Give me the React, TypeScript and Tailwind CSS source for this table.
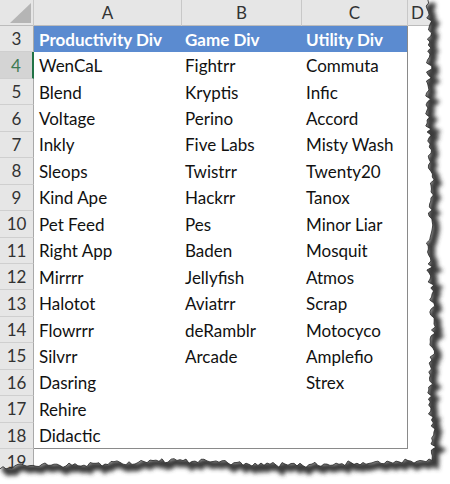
import React from "react";

const colA = ["WenCaL", "Blend", "Voltage", "Inkly", "Sleops", "Kind Ape", "Pet Feed", "Right App", "Mirrrr", "Halotot", "Flowrrr", "Silvrr", "Dasring", "Rehire", "Didactic"];
const colB = ["Fightrr", "Kryptis", "Perino", "Five Labs", "Twistrr", "Hackrr", "Pes", "Baden", "Jellyfish", "Aviatrr", "deRamblr", "Arcade"];
const colC = ["Commuta", "Infic", "Accord", "Misty Wash", "Twenty20", "Tanox", "Minor Liar", "Mosquit", "Atmos", "Scrap", "Motocyco", "Amplefio", "Strex"];

// deterministic jitter for the torn paper edge
function jag(seed: number) {
  let s = seed;
  return () => {
    s = (s * 9301 + 49297) % 233280;
    return s / 233280;
  };
}

function tornEdge() {
  const r = jag(7);
  const pts: [number, number][] = [];
  for (let y = 0; y <= 458; y += 3) {
    const base = 428 + (y / 458) * 5 + Math.sin(y / 23) * 1.5;
    pts.push([base + (r() - 0.5) * 6, y]);
  }
  for (let x = 432; x >= 0; x -= 3) {
    const base = 463 + Math.sin(x / 37) * 2 + (x < 40 ? (40 - x) / 10 : 0);
    pts.push([x, base + (r() - 0.5) * 5]);
  }
  return pts;
}

function TornOverlay() {
  const pts = tornEdge();
  const line = pts.map((p) => p.join(",")).join(" ");
  const outside = `450,0 ${line} 0,484 450,484`;
  return (
    <svg className="absolute inset-0 pointer-events-none" width={450} height={484}>
      <defs>
        <clipPath id="out">
          <polygon points={outside} />
        </clipPath>
        <filter id="blur" x="-10%" y="-10%" width="120%" height="120%">
          <feGaussianBlur stdDeviation="2" />
        </filter>
      </defs>
      <polygon points={outside} fill="#ffffff" />
      <g clipPath="url(#out)">
        <polyline points={line} fill="none" stroke="#3a3a3a" strokeWidth={8} filter="url(#blur)" transform="translate(3,3)" />
      </g>
      <polyline points={line} fill="none" stroke="#222" strokeWidth={0.8} />
    </svg>
  );
}

export default function App() {
  const rows = Array.from({ length: 17 }, (_, i) => i + 3);
  return (
    <div className="relative w-[450px] h-[484px] overflow-hidden bg-white" style={{ fontFamily: "Lato, 'Open Sans', sans-serif" }}>
      {/* column headers */}
      <div className="grid grid-cols-[34px_148px_120px_106px_1fr] h-[26px] bg-[#e6e6e6] border-b border-[#bcbcbc] text-[17px] text-[#333]">
        <div className="relative border-r border-[#c8c8c8]">
          <div className="absolute right-[2px] bottom-[3px] w-0 h-0 border-l-[21px] border-l-transparent border-b-[20px] border-b-[#b5b5b5]" />
        </div>
        <div className="flex items-center justify-center border-r border-[#c8c8c8]">A</div>
        <div className="flex items-center justify-center border-r border-[#c8c8c8]">B</div>
        <div className="flex items-center justify-center border-r border-[#c8c8c8]">C</div>
        <div className="flex items-center pl-[3px]">D</div>
      </div>

      {/* rows */}
      {rows.map((n) => {
        const i = n - 4;
        const isHead = n === 3;
        const isLast = n === 18;
        const inTable = n <= 18;
        return (
          <div key={n} className="grid grid-cols-[34px_148px_120px_106px_1fr] h-[26.45px] text-[17px] leading-none">
            <div
              className={`flex items-center justify-center border-b border-[#cfcfcf] border-r ${
                n === 4 ? "bg-[#d4d4d4] text-[#3d7a52] border-r-[#217346] border-r-2" : "bg-[#e6e6e6] text-[#333] border-r-[#a9a9a9]"
              }`}
            >
              {n}
            </div>
            {isHead ? (
              <>
                <div className="flex items-center pl-[5px] bg-[#5b8bd0] text-white font-bold">Productivity Div</div>
                <div className="flex items-center pl-[3px] bg-[#5b8bd0] text-white font-bold">Game Div</div>
                <div className="flex items-center pl-[4px] bg-[#5b8bd0] text-white font-bold border-r border-[#8a8a8a]">Utility Div</div>
              </>
            ) : (
              <>
                <div className={`flex items-center pl-[5px] text-[#111] ${isLast ? "border-b border-[#8a8a8a]" : ""}`}>{inTable ? colA[i] : ""}</div>
                <div className={`flex items-center pl-[3px] text-[#111] ${isLast ? "border-b border-[#8a8a8a]" : ""}`}>{inTable ? colB[i] ?? "" : ""}</div>
                <div className={`flex items-center pl-[4px] text-[#111] ${inTable ? "border-r border-[#8a8a8a]" : ""} ${isLast ? "border-b border-b-[#8a8a8a]" : ""}`}>
                  {inTable ? colC[i] ?? "" : ""}
                </div>
              </>
            )}
            <div />
          </div>
        );
      })}

      <TornOverlay />
    </div>
  );
}
